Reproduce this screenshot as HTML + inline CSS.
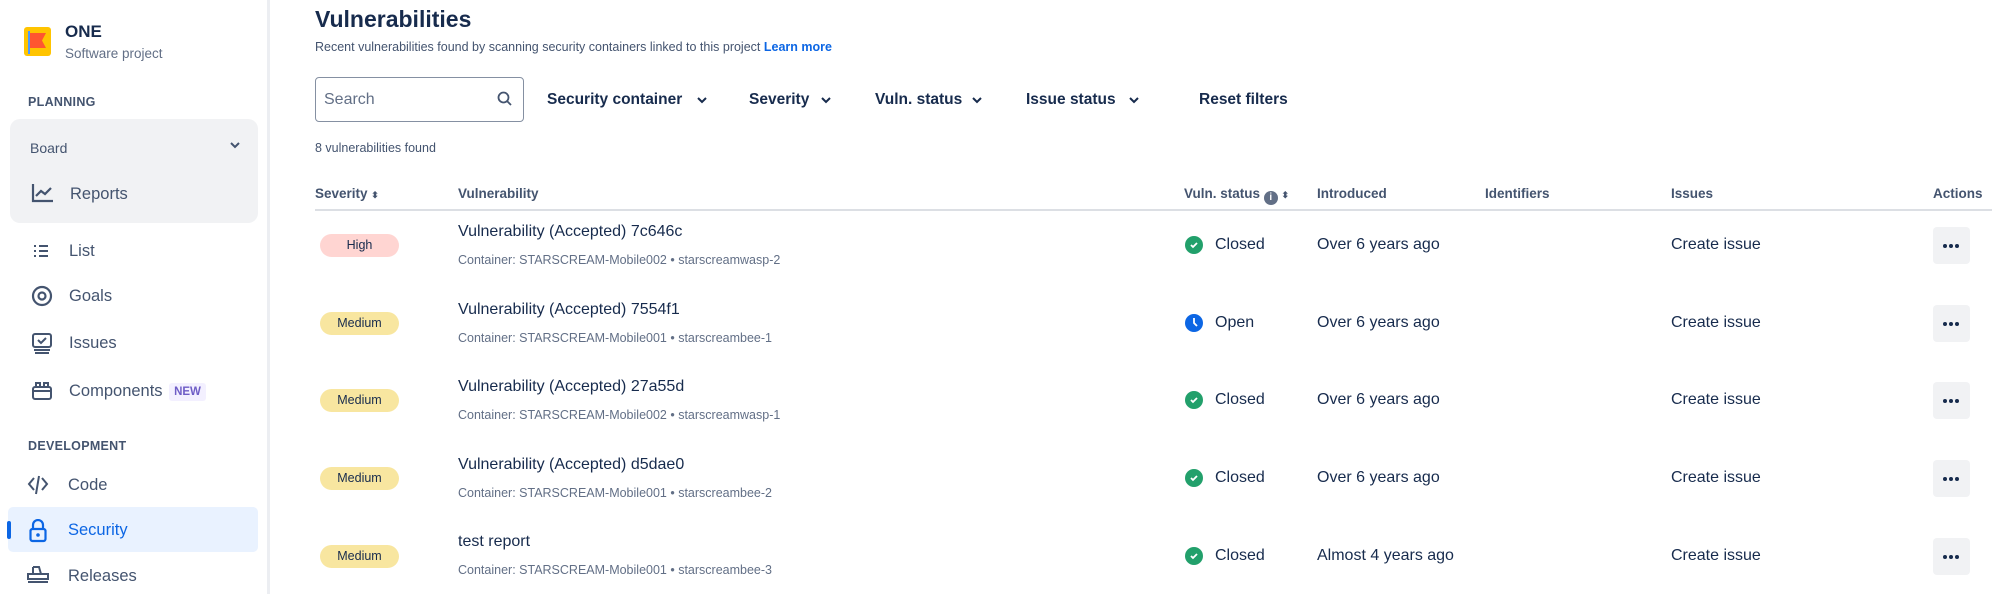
<!DOCTYPE html>
<html><head><meta charset="utf-8"><style>
*{box-sizing:border-box;margin:0;padding:0}
body{width:1999px;height:594px;overflow:hidden;background:#fff;font-family:"Liberation Sans",sans-serif;color:#172b4d;position:relative}
.a{position:absolute;white-space:nowrap}
.side{position:absolute;left:0;top:0;width:270px;height:594px;border-right:3px solid #eceef2}
.nav{font-size:16.5px;color:#44546f}
.sec{font-size:12.5px;font-weight:bold;color:#44546f;letter-spacing:.3px}
.hd{font-size:13.5px;color:#44546f;font-weight:bold}
.t{font-size:16px;color:#172b4d}
.s{font-size:12.5px;color:#626f86}
.badge{position:absolute;left:320px;width:79px;height:23px;border-radius:12px;font-size:12.5px;text-align:center;line-height:23px;color:#172b4d}
.med{background:#f8e6a0}.high{background:#ffd5d2}
.dots{position:absolute;left:1933px;width:37px;height:37px;background:#f1f2f4;border-radius:4px}
.dots:before{content:"";position:absolute;left:10px;top:17px;width:4px;height:4px;border-radius:50%;background:#172b4d;box-shadow:6px 0 0 #172b4d,12px 0 0 #172b4d}
.ic{position:absolute;left:1185px;width:18px;height:18px;border-radius:50%}
.f{font-size:15.5px;font-weight:bold;color:#172b4d}
</style></head><body>
<div class="side">
<div class="a" style="left:24px;top:27px;width:27px;height:29px;background:#ffc400;border-radius:3px"></div>
<div class="a" style="left:30px;top:33px;width:16px;height:15px;background:#ff5630;clip-path:polygon(0 0,100% 0,75% 50%,100% 100%,0 100%)"></div>
<div class="a" style="left:28px;top:31px;width:2px;height:23px;background:#4c9aff"></div>
<div class="a" style="left:65px;top:22px;font-size:17px;font-weight:bold">ONE</div>
<div class="a" style="left:65px;top:46px;font-size:13.5px;color:#626f86">Software project</div>
<div class="a sec" style="left:28px;top:95px">PLANNING</div>
<div class="a" style="left:10px;top:119px;width:248px;height:104px;background:#f1f2f4;border-radius:10px"></div>
<div class="a nav" style="left:30px;top:140px;font-size:14px">Board</div>
<svg class="a" style="left:229px;top:140px" width="12" height="10"><path d="M2 3l4 4 4-4" stroke="#44546f" stroke-width="2" fill="none"/></svg>
<svg class="a" style="left:31px;top:183px" width="24" height="20"><path d="M2 1v17h20M5 13l5-5 4 3 6-6" stroke="#44546f" stroke-width="2.2" fill="none"/></svg>
<div class="a nav" style="left:70px;top:185px">Reports</div>
<svg class="a" style="left:33px;top:244px" width="16" height="14"><path d="M1 2h2M6 2h9M1 7h2M6 7h9M1 12h2M6 12h9" stroke="#44546f" stroke-width="2"/></svg>
<div class="a nav" style="left:69px;top:242px">List</div>
<svg class="a" style="left:31px;top:285px" width="22" height="22"><circle cx="11" cy="11" r="9" stroke="#44546f" stroke-width="2.2" fill="none"/><circle cx="11" cy="11" r="3.5" stroke="#44546f" stroke-width="2.2" fill="none"/></svg>
<div class="a nav" style="left:69px;top:287px">Goals</div>
<svg class="a" style="left:31px;top:333px" width="22" height="22"><rect x="2" y="1" width="18" height="13" rx="2" stroke="#44546f" stroke-width="2" fill="none"/><path d="M7 7l3 3 5-5M3 17h16M4 20h14" stroke="#44546f" stroke-width="2" fill="none"/></svg>
<div class="a nav" style="left:69px;top:334px">Issues</div>
<svg class="a" style="left:31px;top:381px" width="22" height="20"><rect x="2" y="6" width="18" height="12" rx="2" stroke="#44546f" stroke-width="2" fill="none"/><path d="M5 6V2h4v4M13 6V2h4v4M2 10h18" stroke="#44546f" stroke-width="2" fill="none"/></svg>
<div class="a nav" style="left:69px;top:382px">Components</div>
<div class="a" style="left:169px;top:383px;width:37px;height:18px;background:#f3f0ff;border-radius:3px;font-size:11.5px;font-weight:bold;color:#6e5dc6;text-align:center;line-height:18px">NEW</div>
<div class="a sec" style="left:28px;top:439px">DEVELOPMENT</div>
<svg class="a" style="left:27px;top:475px" width="22" height="20"><path d="M7 3L2 9l5 6M15 3l5 6-5 6M12 1L9 19" stroke="#44546f" stroke-width="2" fill="none"/></svg>
<div class="a nav" style="left:68px;top:476px">Code</div>
<div class="a" style="left:8px;top:507px;width:250px;height:45px;background:#e9f2ff;border-radius:5px"></div>
<div class="a" style="left:7px;top:521px;width:4px;height:18px;background:#0c66e4;border-radius:2px"></div>
<svg class="a" style="left:29px;top:519px" width="18" height="24"><path d="M4 10V6a5 5 0 0110 0v4" stroke="#0c66e4" stroke-width="2.2" fill="none"/><rect x="1.5" y="10" width="15" height="12" rx="2" stroke="#0c66e4" stroke-width="2.2" fill="none"/><circle cx="9" cy="16" r="1.8" fill="#0c66e4"/></svg>
<div class="a nav" style="left:68px;top:521px;color:#0c66e4">Security</div>
<svg class="a" style="left:26px;top:565px" width="24" height="22"><path d="M7 2h6l2 7M7 2v7M2 9h20v5H2zM2 17h20" stroke="#44546f" stroke-width="2" fill="none"/></svg>
<div class="a nav" style="left:68px;top:567px">Releases</div>
</div>

<div class="a" style="left:315px;top:6px;font-size:23px;font-weight:bold;color:#172b4d">Vulnerabilities</div>
<div class="a" style="left:315px;top:40px;font-size:12.5px;color:#44546f">Recent vulnerabilities found by scanning security containers linked to this project <span style="color:#0c66e4;font-weight:bold">Learn more</span></div>
<div class="a" style="left:315px;top:77px;width:209px;height:45px;border:1.5px solid #8590a2;border-radius:4px"></div>
<div class="a" style="left:324px;top:91px;font-size:16px;color:#626f86">Search</div>
<svg class="a" style="left:497px;top:91px" width="16" height="16"><circle cx="6.5" cy="6.5" r="5" stroke="#44546f" stroke-width="1.8" fill="none"/><path d="M10 10l4 4" stroke="#44546f" stroke-width="1.8"/></svg>
<div class="a f" style="left:547px;top:91px">Security container</div>
<div class="a f" style="left:749px;top:91px">Severity</div>
<div class="a f" style="left:875px;top:91px">Vuln. status</div>
<div class="a f" style="left:1026px;top:91px">Issue status</div>
<svg class="a" style="left:696px;top:96px" width="12" height="10"><path d="M2 2l4 4 4-4" stroke="#172b4d" stroke-width="2" fill="none"/></svg>
<svg class="a" style="left:820px;top:96px" width="12" height="10"><path d="M2 2l4 4 4-4" stroke="#172b4d" stroke-width="2" fill="none"/></svg>
<svg class="a" style="left:971px;top:96px" width="12" height="10"><path d="M2 2l4 4 4-4" stroke="#172b4d" stroke-width="2" fill="none"/></svg>
<svg class="a" style="left:1128px;top:96px" width="12" height="10"><path d="M2 2l4 4 4-4" stroke="#172b4d" stroke-width="2" fill="none"/></svg>
<div class="a f" style="left:1199px;top:91px">Reset filters</div>
<div class="a" style="left:315px;top:141px;font-size:12.5px;color:#44546f">8 vulnerabilities found</div>

<div class="a hd" style="left:315px;top:186px">Severity <span style="font-size:9px">⬍</span></div>
<div class="a hd" style="left:458px;top:186px">Vulnerability</div>
<div class="a hd" style="left:1184px;top:186px">Vuln. status <span style="display:inline-block;width:14px;height:14px;border-radius:50%;background:#626f86;color:#fff;font-size:10px;text-align:center;line-height:14px;vertical-align:-2px">i</span> <span style="font-size:9px">⬍</span></div>
<div class="a hd" style="left:1317px;top:186px">Introduced</div>
<div class="a hd" style="left:1485px;top:186px">Identifiers</div>
<div class="a hd" style="left:1671px;top:186px">Issues</div>
<div class="a hd" style="left:1933px;top:186px">Actions</div>
<div class="a" style="left:315px;top:209px;width:1677px;height:2px;background:#dcdfe4"></div>

<div class="badge high" style="top:234px">High</div>
<div class="a t" style="left:458px;top:223px">Vulnerability (Accepted) 7c646c</div>
<div class="a s" style="left:458px;top:253px">Container: STARSCREAM-Mobile002 • starscreamwasp-2</div>
<div class="ic" style="top:236px;background:#22a06b"></div><svg class="a" style="left:1189px;top:240px" width="10" height="10"><path d="M2 5l2 2 4-4" stroke="#fff" stroke-width="1.8" fill="none"/></svg>
<div class="a t" style="left:1215px;top:236px">Closed</div>
<div class="a t" style="left:1317px;top:236px">Over 6 years ago</div>
<div class="a t" style="left:1671px;top:236px">Create issue</div>
<div class="dots" style="top:227px"></div>

<div class="badge med" style="top:312px">Medium</div>
<div class="a t" style="left:458px;top:301px">Vulnerability (Accepted) 7554f1</div>
<div class="a s" style="left:458px;top:331px">Container: STARSCREAM-Mobile001 • starscreambee-1</div>
<div class="ic" style="top:314px;background:#0c66e4"></div><svg class="a" style="left:1185px;top:314px" width="18" height="18"><path d="M9 4v5l3 3" stroke="#fff" stroke-width="1.8" fill="none"/></svg>
<div class="a t" style="left:1215px;top:314px">Open</div>
<div class="a t" style="left:1317px;top:314px">Over 6 years ago</div>
<div class="a t" style="left:1671px;top:314px">Create issue</div>
<div class="dots" style="top:305px"></div>

<div class="badge med" style="top:389px">Medium</div>
<div class="a t" style="left:458px;top:378px">Vulnerability (Accepted) 27a55d</div>
<div class="a s" style="left:458px;top:408px">Container: STARSCREAM-Mobile002 • starscreamwasp-1</div>
<div class="ic" style="top:391px;background:#22a06b"></div><svg class="a" style="left:1189px;top:395px" width="10" height="10"><path d="M2 5l2 2 4-4" stroke="#fff" stroke-width="1.8" fill="none"/></svg>
<div class="a t" style="left:1215px;top:391px">Closed</div>
<div class="a t" style="left:1317px;top:391px">Over 6 years ago</div>
<div class="a t" style="left:1671px;top:391px">Create issue</div>
<div class="dots" style="top:382px"></div>

<div class="badge med" style="top:467px">Medium</div>
<div class="a t" style="left:458px;top:456px">Vulnerability (Accepted) d5dae0</div>
<div class="a s" style="left:458px;top:486px">Container: STARSCREAM-Mobile001 • starscreambee-2</div>
<div class="ic" style="top:469px;background:#22a06b"></div><svg class="a" style="left:1189px;top:473px" width="10" height="10"><path d="M2 5l2 2 4-4" stroke="#fff" stroke-width="1.8" fill="none"/></svg>
<div class="a t" style="left:1215px;top:469px">Closed</div>
<div class="a t" style="left:1317px;top:469px">Over 6 years ago</div>
<div class="a t" style="left:1671px;top:469px">Create issue</div>
<div class="dots" style="top:460px"></div>

<div class="badge med" style="top:545px">Medium</div>
<div class="a t" style="left:458px;top:533px">test report</div>
<div class="a s" style="left:458px;top:563px">Container: STARSCREAM-Mobile001 • starscreambee-3</div>
<div class="ic" style="top:547px;background:#22a06b"></div><svg class="a" style="left:1189px;top:551px" width="10" height="10"><path d="M2 5l2 2 4-4" stroke="#fff" stroke-width="1.8" fill="none"/></svg>
<div class="a t" style="left:1215px;top:547px">Closed</div>
<div class="a t" style="left:1317px;top:547px">Almost 4 years ago</div>
<div class="a t" style="left:1671px;top:547px">Create issue</div>
<div class="dots" style="top:538px"></div>
</body></html>
